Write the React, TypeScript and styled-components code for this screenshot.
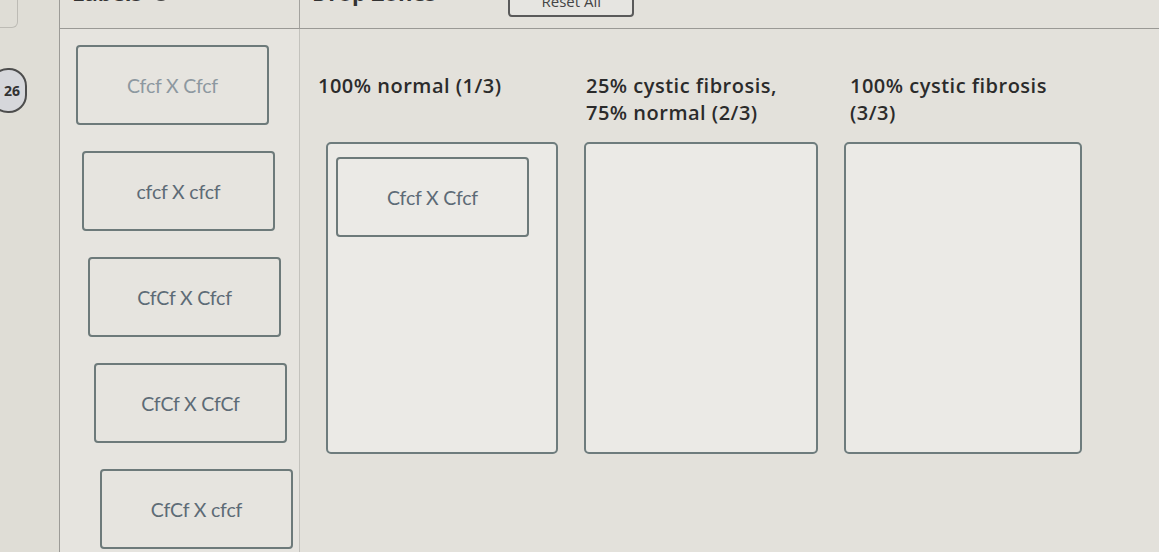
import React from 'react'
import styled, { createGlobalStyle } from 'styled-components'

const GlobalStyle = createGlobalStyle`
  html, body {
    margin: 0;
    padding: 0;
    background: #e3e1db;
  }
  * { box-sizing: border-box; }
`

const Viewport = styled.div`
  width: 1159px;
  height: 552px;
  overflow: hidden;
  background: #e3e1db;
  font-family: 'Open Sans', 'Liberation Sans', sans-serif;
`

const Page = styled.div`
  margin-top: -28px;
  display: grid;
  grid-template-columns: 60px 240px 1fr;
  grid-template-rows: 57px 560px;
`

const Sidebar = styled.div`
  grid-row: 1 / span 2;
  background: #dfddd6;
  border-right: 1px solid #9c9b97;
  display: flex;
  flex-direction: column;
`

const SideTab = styled.div`
  margin-top: 16px;
  width: 18px;
  height: 40px;
  border: 1px solid #bdbbb5;
  border-left: none;
  border-radius: 0 0 6px 0;
`

const Badge = styled.div`
  margin-top: 40px;
  margin-left: -10px;
  width: 37px;
  height: 45px;
  border: 2px solid #4d4d4d;
  border-radius: 18px;
  background: #d6d7db;
  display: flex;
  align-items: center;
  justify-content: flex-end;
  padding-right: 5px;
  font-size: 14px;
  font-weight: 700;
  color: #333;
`

const HeadCell = styled.div<{ $divider?: boolean }>`
  display: flex;
  align-items: flex-end;
  border-bottom: 1px solid #9a9995;
  border-right: ${p => (p.$divider ? '1px solid #a3a29e' : 'none')};
  padding-left: 12px;
`

const HeadTitle = styled.div`
  font-size: 22px;
  font-weight: 700;
  line-height: 28px;
  color: #333;
  margin-bottom: 22px;
  display: flex;
  align-items: center;
  gap: 10px;
`

const InfoDot = styled.span`
  width: 18px;
  height: 18px;
  border: 2px solid #444;
  border-radius: 50%;
`

const ResetButton = styled.button`
  margin-left: 72px;
  margin-bottom: 11px;
  width: 126px;
  height: 27px;
  border: 2px solid #5a5a5a;
  border-radius: 4px;
  background: #e6e5e1;
  font-family: inherit;
  font-size: 15px;
  line-height: 15px;
  padding-bottom: 6px;
  color: #444;
`

const LabelsPanel = styled.div`
  background: #e6e4df;
  border-right: 1px solid #c3c2bd;
  padding-top: 16px;
  display: flex;
  flex-direction: column;
  gap: 26px;
`

const Card = styled.div<{ $shift?: number; $ghost?: boolean }>`
  margin-left: ${p => p.$shift ?? 0}px;
  width: 193px;
  height: 80px;
  flex: none;
  border: 2px solid #6d7a7a;
  border-radius: 4px;
  display: flex;
  align-items: center;
  justify-content: center;
  font-family: Lato, 'Open Sans', sans-serif;
  font-size: 19.5px;
  letter-spacing: -0.2px;
  color: ${p => (p.$ghost ? '#8d98a0' : '#5d6b76')};
`

const DropPanel = styled.div`
  padding: 43px 0 0 26px;
  display: grid;
  grid-template-columns: 232px 234px 238px;
  column-gap: 26px;
  align-items: start;
`

const Zone = styled.div`
  display: flex;
  flex-direction: column;
  gap: 16px;
`

const ZoneTitle = styled.div<{ $indent: number }>`
  height: 54px;
  margin-left: ${p => p.$indent}px;
  font-size: 20px;
  font-weight: 600;
  line-height: 27px;
  letter-spacing: 0.5px;
  color: #2b2b2b;
  white-space: nowrap;
`

const ZoneBox = styled.div`
  height: 312px;
  background: #ebeae6;
  border: 2px solid #6e7c7d;
  border-radius: 5px;
  padding: 13px 0 0 8px;
`

const labels = [
  { text: 'Cfcf X Cfcf', shift: 16, ghost: true },
  { text: 'cfcf X cfcf', shift: 22 },
  { text: 'CfCf X Cfcf', shift: 28 },
  { text: 'CfCf X CfCf', shift: 34 },
  { text: 'CfCf X cfcf', shift: 40 },
]

const zones = [
  { title: ['100% normal (1/3)'], indent: -8, placed: 'Cfcf X Cfcf' },
  { title: ['25% cystic fibrosis,', '75% normal (2/3)'], indent: 2 },
  { title: ['100% cystic fibrosis', '(3/3)'], indent: 6 },
]

export default function App() {
  return (
    <Viewport>
      <GlobalStyle />
      <Page>
        <Sidebar>
          <SideTab />
          <Badge>26</Badge>
        </Sidebar>

        <HeadCell $divider>
          <HeadTitle>
            Labels <InfoDot />
          </HeadTitle>
        </HeadCell>
        <HeadCell>
          <HeadTitle>Drop Zones</HeadTitle>
          <ResetButton>Reset All</ResetButton>
        </HeadCell>

        <LabelsPanel>
          {labels.map(l => (
            <Card key={l.text + l.shift} $shift={l.shift} $ghost={l.ghost}>
              {l.text}
            </Card>
          ))}
        </LabelsPanel>

        <DropPanel>
          {zones.map((z, i) => (
            <Zone key={i}>
              <ZoneTitle $indent={z.indent}>
                {z.title.map(line => (
                  <div key={line}>{line}</div>
                ))}
              </ZoneTitle>
              <ZoneBox>{z.placed && <Card>{z.placed}</Card>}</ZoneBox>
            </Zone>
          ))}
        </DropPanel>
      </Page>
    </Viewport>
  )
}
